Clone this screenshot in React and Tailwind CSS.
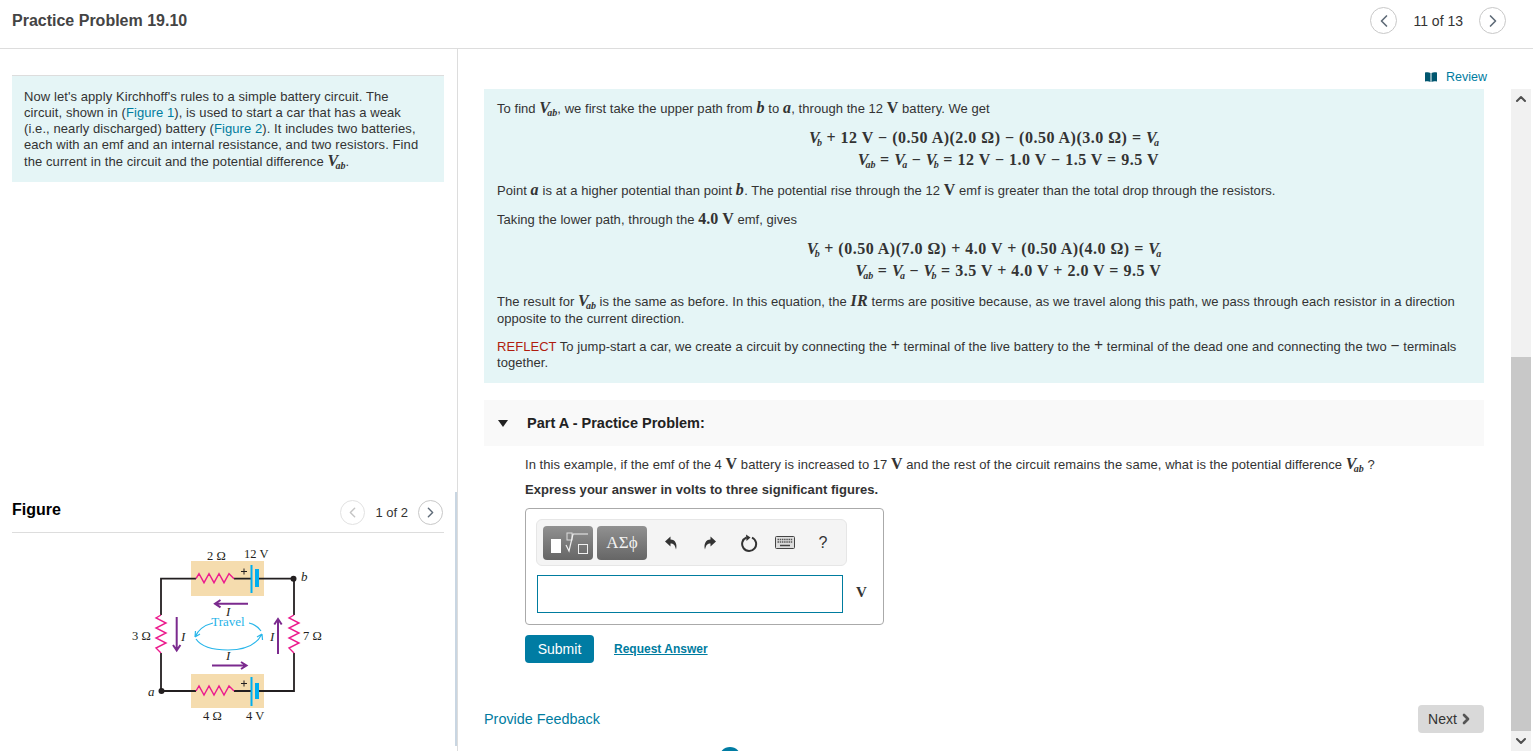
import { ChevronLeft, ChevronRight, ChevronUp, ChevronDown } from "lucide-react";

function CircleBtn({ children, faded, small }) {
  return (
    <button className={`flex items-center justify-center rounded-full border bg-white ${small ? "h-[25px] w-[25px]" : "h-[27px] w-[27px]"} ${faded ? "border-[#e2e2e2] text-[#c4c4c4]" : "border-[#c8c8c8] text-[#5f6b78]"}`}>
      {children}
    </button>
  );
}

function Mv({ v, sub }) {
  return (
    <span className="font-['Liberation_Serif',serif] text-[16px] font-bold italic leading-none tracking-[0.3px]">
      {v}
      {sub && <span className="-ml-[3px] align-[-3px] text-[10px] leading-none tracking-normal">{sub}</span>}
    </span>
  );
}

function Mt({ children }) {
  return <span className="font-['Liberation_Serif',serif] text-[16px] font-bold leading-none">{children}</span>;
}

function EqLine({ children }) {
  return <div className="h-[22px] whitespace-nowrap text-right font-['Liberation_Serif',serif] text-[16px] font-bold leading-[22px] tracking-[0.5px]">{children}</div>;
}

function Circuit() {
  const zigH = (x0, y) => `M${x0} ${y} l3 -5 l5 9 l5 -9 l5 9 l5 -9 l5 9 l5 -9 l5 5`;
  const zigV = (x, y0) => `M${x} ${y0} l-5 3 l10 5 l-10 5 l10 5 l-10 5 l10 5 l-10 5 l5 5`;
  const serif = "'Liberation Serif', serif";
  return (
    <svg width="230" height="190" viewBox="0 0 230 190" className="block" fontFamily={serif}>
      <rect x="81" y="21" width="73" height="35" fill="#f5dcae" />
      <rect x="81" y="134" width="73" height="34" fill="#f5dcae" />
      <g fill="none" stroke="#231f20" strokeWidth="1.8">
        <path d="M86 38.7H51V75M51 113V151H86M124 38.7H141M149 38.7H184V75M184 113V151H149M124 151H141" />
      </g>
      <g fill="none" stroke="#ec1c8e" strokeWidth="1.4">
        <path d={zigH(86, 38.7)} />
        <path d={zigH(86, 151)} />
        <path d={zigV(51, 75)} />
        <path d={zigV(184, 75)} />
      </g>
      <rect x="140.500" y="25" width="2" height="28" fill="#00aeef" />
      <rect x="145" y="29" width="4" height="18" fill="#00aeef" />
      <rect x="140.500" y="137" width="2" height="29" fill="#00aeef" />
      <rect x="145" y="143" width="4" height="16" fill="#00aeef" />
      <path d="M131 31.500h6M134 28.500v6M131 143.500h6M134 140.500v6" stroke="#231f20" strokeWidth="1" />
      <circle cx="183.500" cy="38.700" r="3" fill="#231f20" />
      <circle cx="51.500" cy="151" r="3" fill="#231f20" />
      <g fill="none" stroke="#7b2a8e" strokeWidth="2">
        <path d="M138 63.700H105M110.500 60l-5.500 3.700l5.500 3.700" />
        <path d="M102 125.500H136M131 122l5.500 3.500l-5.500 3.500" />
        <path d="M66.700 77V110M63 105l3.700 5.500l3.700 -5.500" />
        <path d="M168 114V79M164.300 84.500l3.700 -5.500l3.700 5.500" />
      </g>
      <g fill="none" stroke="#29b6ea" strokeWidth="1.2">
        <path d="M103 83C95 85 88 90 85 97M85 97l0.500 -6M85 97l5 -3" />
        <path d="M86 99C92 108 105 110 118 110C132 110 146 106 152 94M152 94l-5 3M152 94l0.500 6" />
        <path d="M139 83C144 84 148 87 151 91" />
      </g>
      <text x="118" y="86" textAnchor="middle" fontSize="13" fill="#1fb3e8">Travel</text>
      <g fontSize="12.500" fill="#231f20">
        <text x="97" y="20">2 Ω</text>
        <text x="134" y="18">12 V</text>
        <text x="22" y="100">3 Ω</text>
        <text x="193" y="100">7 Ω</text>
        <text x="93" y="180">4 Ω</text>
        <text x="136" y="180">4 V</text>
      </g>
      <g fontSize="13" fontStyle="italic" fill="#231f20">
        <text x="38" y="156">a</text>
        <text x="191" y="41">b</text>
        <text x="116" y="76">I</text>
        <text x="71" y="101">I</text>
        <text x="160" y="101">I</text>
        <text x="116" y="120">I</text>
      </g>
    </svg>
  );
}

function ToolIcon({ children }) {
  return <div className="flex w-[38px] items-center justify-center text-[#333]">{children}</div>;
}

function Toolbar() {
  return (
    <div className="flex h-[47px] w-[311px] items-center rounded-md border border-[#e6e6e6] bg-[#f4f4f4] pl-[6px]">
      <button className="h-[34px] w-[50px] rounded bg-gradient-to-b from-[#919191] to-[#666666]">
        <svg width="50" height="34" viewBox="0 0 50 34" className="block">
          <rect x="8" y="13" width="10" height="14" fill="#fff" />
          <rect x="24" y="7" width="5" height="7" fill="none" stroke="#ddd" />
          <path d="M23 19l3 6l4 -17h15" fill="none" stroke="#f0f0f0" strokeWidth="1.200" />
          <rect x="35.500" y="18.500" width="9" height="9" fill="none" stroke="#f0f0f0" />
        </svg>
      </button>
      <button className="ml-1 flex h-[34px] w-[50px] items-center justify-center rounded bg-gradient-to-b from-[#919191] to-[#666666] font-['Liberation_Serif',serif] text-[17px] text-[#f2f2f2]">
        ΑΣϕ
      </button>
      <div className="ml-[5px] flex items-center">
        <ToolIcon>
          <svg width="15" height="16" viewBox="0 0 15 16">
            <path d="M6.500 1.500L1 6.500l5.500 5V8.500c3 0 4.500 1.500 5.500 6c1.500 -5 -.5 -10 -5.500 -10z" fill="#333" />
          </svg>
        </ToolIcon>
        <ToolIcon>
          <svg width="15" height="16" viewBox="0 0 15 16">
            <path d="M8.500 1.500L14 6.500l-5.500 5V8.500c-3 0 -4.500 1.500 -5.500 6c-1.500 -5 .5 -10 5.500 -10z" fill="#333" />
          </svg>
        </ToolIcon>
        <ToolIcon>
          <svg width="18" height="18" viewBox="0 0 18 18" className="ml-[5px]">
            <path d="M11 3.600A7 7 0 1 1 5.500 3.500" fill="none" stroke="#333" strokeWidth="2" />
            <path d="M5 0.500L9.500 3.500L5.500 7z" fill="#333" />
          </svg>
        </ToolIcon>
        <ToolIcon>
          <svg width="20" height="13" viewBox="0 0 20 13">
            <rect x="0.500" y="0.500" width="19" height="12" rx="1" fill="#ddd" stroke="#444" />
            <path d="M2.500 3.500h15M2.500 6h15" stroke="#555" strokeWidth="1.300" strokeDasharray="1.500 0.700" />
            <path d="M5 9.500h10" stroke="#444" strokeWidth="1.500" />
          </svg>
        </ToolIcon>
        <ToolIcon>
          <span className="text-[16px] leading-none">?</span>
        </ToolIcon>
      </div>
    </div>
  );
}

export default function App() {
  return (
    <div className="h-[751px] w-[1533px] overflow-hidden bg-white font-['Liberation_Sans',Arial,sans-serif] text-[13px] text-[#333]">
      <header className="flex h-[49px] items-center justify-between border-b border-[#dddddd] pl-3 pr-[27px]">
        <h1 className="-mt-[7px] text-[16px] font-bold text-[#444]">Practice Problem 19.10</h1>
        <div className="-mt-[7px] flex items-center gap-[16px] text-[14px]">
          <CircleBtn><ChevronLeft size={20} /></CircleBtn>
          <span className="mt-[2px]">11 of 13</span>
          <CircleBtn><ChevronRight size={20} /></CircleBtn>
        </div>
      </header>

      <div className="flex h-[702px]">
        <aside className="flex w-[458px] shrink-0 flex-col border-r border-[#dddddd] pl-3 pr-[13px]">
          <div className="mt-[26px] h-[107px] border-t border-[#dddddd] bg-[#e5f5f6] pl-3 pr-[24px] pt-[13px] leading-4 tracking-[0.08px]">
            <p>
              Now let's apply Kirchhoff's rules to a simple battery circuit. The
              circuit, shown in (<span className="text-[#007c9f]">Figure 1</span>), is used to start a car that has a weak
              (i.e., nearly discharged) battery (<span className="text-[#007c9f]">Figure 2</span>). It includes two batteries,
              each with an emf and an internal resistance, and two resistors. Find
              the current in the circuit and the potential difference <Mv v="V" sub="ab" />.
            </p>
          </div>
          <div className="-mr-[13px] mt-[310px] h-[254px] border-r-2 border-[#c9d6e2] pr-[11px] pt-[4px]">
            <div className="flex h-[37px] items-center justify-between border-b border-[#dddddd] pb-[8px] pr-px">
              <h2 className="text-[16px] font-bold text-black">Figure</h2>
              <div className="mt-[5px] flex items-center gap-[10px]">
                <CircleBtn faded small><ChevronLeft size={17} /></CircleBtn>
                <span>1 of 2</span>
                <CircleBtn small><ChevronRight size={17} /></CircleBtn>
              </div>
            </div>
            <div className="ml-[98px] mt-[7px]">
              <Circuit />
            </div>
          </div>
        </aside>

        <main className="flex min-w-0 flex-1 flex-col">
          <div className="flex h-[40px] items-center justify-end gap-[9px] pt-[16px] pr-[46px] text-[12.500px] text-[#007c9f]">
            <svg width="12" height="10" viewBox="0 0 12 10">
              <path d="M0 0.500c2 -.5 4 -.5 5.500 .5v9c-1.500 -1 -3.500 -1 -5.500 -.5zM12 0.500c-2 -.5 -4 -.5 -5.500 .5v9c1.500 -1 3.500 -1 5.500 -.5z" fill="#00566f" />
            </svg>
            <span>Review</span>
          </div>
          <div className="flex min-h-0 flex-1">
            <div className="ml-[26px] w-[1000px] shrink-0 tracking-[0.05px]">
              <section className="h-[294px] bg-[#e5f5f6] px-[13px] pt-[11px] leading-4">
                <p>
                  To find <Mv v="V" sub="ab" />, we first take the upper path from <Mv v="b" /> to <Mv v="a" />, through the 12 <Mt>V</Mt> battery. We get
                </p>
                <div className="mx-auto mt-[9px] w-fit">
                  <EqLine><Mv v="V" sub="b" /> + 12 V − (0.50 A)(2.0 Ω) − (0.50 A)(3.0 Ω) = <Mv v="V" sub="a" /></EqLine>
                  <EqLine><Mv v="V" sub="ab" /> = <Mv v="V" sub="a" /> − <Mv v="V" sub="b" /> = 12 V − 1.0 V − 1.5 V = 9.5 V</EqLine>
                </div>
                <p className="mt-[11px]">
                  Point <Mv v="a" /> is at a higher potential than point <Mv v="b" />. The potential rise through the 12 <Mt>V</Mt> emf is greater than the total drop through the resistors.
                </p>
                <p className="mt-[12px]">
                  Taking the lower path, through the <Mt>4.0 V</Mt> emf, gives
                </p>
                <div className="mx-auto mt-[10px] w-fit">
                  <EqLine><Mv v="V" sub="b" /> + (0.50 A)(7.0 Ω) + 4.0 V + (0.50 A)(4.0 Ω) = <Mv v="V" sub="a" /></EqLine>
                  <EqLine><Mv v="V" sub="ab" /> = <Mv v="V" sub="a" /> − <Mv v="V" sub="b" /> = 3.5 V + 4.0 V + 2.0 V = 9.5 V</EqLine>
                </div>
                <p className="mt-[11px]">
                  The result for <Mv v="V" sub="ab" /> is the same as before. In this equation, the <Mv v="IR" /> terms are positive because, as we travel along this path, we pass through each resistor in a direction opposite to the current direction.
                </p>
                <p className="mt-[11px]">
                  <span className="text-[#b01c0e]">REFLECT</span> To jump-start a car, we create a circuit by connecting the <Mt>+</Mt> terminal of the live battery to the <Mt>+</Mt> terminal of the dead one and connecting the two <Mt>−</Mt> terminals together.
                </p>
              </section>

              <div className="mt-[17px] flex h-[46px] items-center bg-[#f9f9f9] pl-[14px] pt-px text-[14.500px] font-bold tracking-normal text-[#222]">
                <span className="h-0 w-0 border-x-[5px] border-t-[7px] border-x-transparent border-t-[#222]" />
                <span className="ml-[19px]">Part A - Practice Problem:</span>
              </div>

              <div className="pl-[41px]">
                <p className="mt-[9px]">
                  In this example, if the emf of the 4 <Mt>V</Mt> battery is increased to 17 <Mt>V</Mt> and the rest of the circuit remains the same, what is the potential difference <Mv v="V" sub="ab" /> ?
                </p>
                <p className="mt-[5px] font-bold">Express your answer in volts to three significant figures.</p>

                <div className="mt-[9px] h-[117px] w-[359px] rounded border border-[#aaaaaa] px-[10px] pt-[10px]">
                  <Toolbar />
                  <div className="ml-px mt-[9px] flex items-center">
                    <div className="h-[38px] w-[306px] border border-[#007c9f] bg-white" />
                    <span className="-mt-[3px] ml-[13px] font-['Liberation_Serif',serif] text-[15px] font-bold">V</span>
                  </div>
                </div>

                <div className="mt-[10px] flex items-center tracking-normal">
                  <button className="h-[28px] w-[69px] rounded-sm bg-[#007ca3] text-[14px] text-white">Submit</button>
                  <a className="-mt-[1px] ml-[20px] text-[12px] font-bold text-[#007c9f] underline">Request Answer</a>
                </div>
              </div>

              <div className="mt-[42px] flex h-[28px] items-center justify-between tracking-normal">
                <a className="mt-[2px] text-[14.400px] text-[#007c9f]">Provide Feedback</a>
                <button className="flex h-[28px] w-[66px] items-center justify-center gap-[1px] rounded-sm bg-[#d9d9d9] text-[14px]">
                  Next
                  <ChevronRight size={16} strokeWidth={4} className="text-[#555]" />
                </button>
              </div>
              <div className="ml-[235px] mt-[14px] h-[22px] w-[22px] rounded-full bg-[#007ca3]" />
            </div>

            <div className="ml-[27px] flex w-[20px] shrink-0 flex-col bg-[#f1f1f1]">
              <div className="flex h-[20px] items-center justify-center text-[#505050]"><ChevronUp size={16} strokeWidth={3} /></div>
              <div className="mt-[248px] flex-1 bg-[#c8c8c8]" />
              <div className="flex h-[20px] items-center justify-center text-[#505050]"><ChevronDown size={16} strokeWidth={3} /></div>
            </div>
          </div>
        </main>
      </div>
    </div>
  );
}
